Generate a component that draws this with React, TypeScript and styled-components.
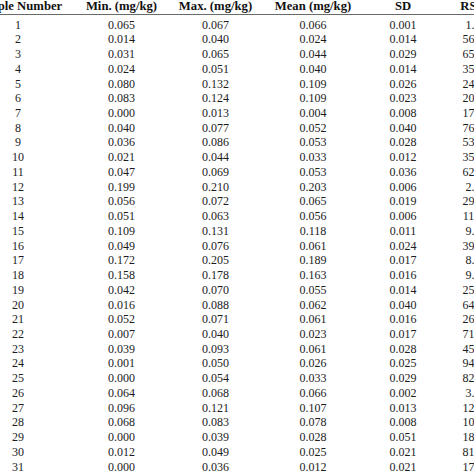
import React from "react";
import styled, {createGlobalStyle} from "styled-components";

const GlobalStyle = createGlobalStyle`
  html, body {
    margin: 0;
    padding: 0;
    background: #ffffff;
    overflow: hidden;
  }
  body {
    width: 474px;
    height: 474px;
  }
`;

// column widths chosen so that the centres sit where the original table had them
const COLUMNS = "100px 107px 81px 114px 66px 74px";

const Page = styled.div`
  width: 474px;
  height: 474px;
  overflow: hidden;
  font-family: "Liberation Serif", "Times New Roman", serif;
  color: #1c1c1c;
`;

const Table = styled.div`
  margin-left: -32px;
  margin-top: -1px;
  width: 542px;
`;

const Row = styled.div<{ $head?: boolean }>`
  display: grid;
  grid-template-columns: ${COLUMNS};
  font-size: ${p => (p.$head ? "12.7px" : "12px")};
  font-weight: ${p => (p.$head ? 700 : 400)};
  line-height: ${p => (p.$head ? "15px" : "14.73px")};
  ${p => p.$head && `
    border-bottom: 1px solid #6a6a6a;
    margin-bottom: 2.6px;
    color: #111;
  `}
`;

const Cell = styled.div`
  text-align: center;
  white-space: nowrap;
`;

const headers = ["Sample Number", "Min. (mg/kg)", "Max. (mg/kg)", "Mean (mg/kg)", "SD", "RSD"];

const rows: string[][] = [
    ["1", "0.065", "0.067", "0.066", "0.001", "1.5"],
    ["2", "0.014", "0.040", "0.024", "0.014", "56.0"],
    ["3", "0.031", "0.065", "0.044", "0.029", "65.9"],
    ["4", "0.024", "0.051", "0.040", "0.014", "35.0"],
    ["5", "0.080", "0.132", "0.109", "0.026", "24.1"],
    ["6", "0.083", "0.124", "0.109", "0.023", "20.9"],
    ["7", "0.000", "0.013", "0.004", "0.008", "17.0"],
    ["8", "0.040", "0.077", "0.052", "0.040", "76.9"],
    ["9", "0.036", "0.086", "0.053", "0.028", "53.1"],
    ["10", "0.021", "0.044", "0.033", "0.012", "35.4"],
    ["11", "0.047", "0.069", "0.053", "0.036", "62.8"],
    ["12", "0.199", "0.210", "0.203", "0.006", "2.9"],
    ["13", "0.056", "0.072", "0.065", "0.019", "29.2"],
    ["14", "0.051", "0.063", "0.056", "0.006", "11.0"],
    ["15", "0.109", "0.131", "0.118", "0.011", "9.3"],
    ["16", "0.049", "0.076", "0.061", "0.024", "39.2"],
    ["17", "0.172", "0.205", "0.189", "0.017", "8.9"],
    ["18", "0.158", "0.178", "0.163", "0.016", "9.8"],
    ["19", "0.042", "0.070", "0.055", "0.014", "25.4"],
    ["20", "0.016", "0.088", "0.062", "0.040", "64.5"],
    ["21", "0.052", "0.071", "0.061", "0.016", "26.2"],
    ["22", "0.007", "0.040", "0.023", "0.017", "71.3"],
    ["23", "0.039", "0.093", "0.061", "0.028", "45.9"],
    ["24", "0.001", "0.050", "0.026", "0.025", "94.2"],
    ["25", "0.000", "0.054", "0.033", "0.029", "82.1"],
    ["26", "0.064", "0.068", "0.066", "0.002", "3.0"],
    ["27", "0.096", "0.121", "0.107", "0.013", "12.1"],
    ["28", "0.068", "0.083", "0.078", "0.008", "10.2"],
    ["29", "0.000", "0.039", "0.028", "0.051", "18.2"],
    ["30", "0.012", "0.049", "0.025", "0.021", "81.0"],
    ["31", "0.000", "0.036", "0.012", "0.021", "17.5"],
];

export default function App() {
    return (
        <Page>
            <GlobalStyle/>
            <Table>
                <Row $head>
                    {headers.map(h => <Cell key={h}>{h}</Cell>)}
                </Row>
                {rows.map(r => (
                    <Row key={r[0]}>
                        {r.map((v, i) => <Cell key={i}>{v}</Cell>)}
                    </Row>
                ))}
            </Table>
        </Page>
    );
}
